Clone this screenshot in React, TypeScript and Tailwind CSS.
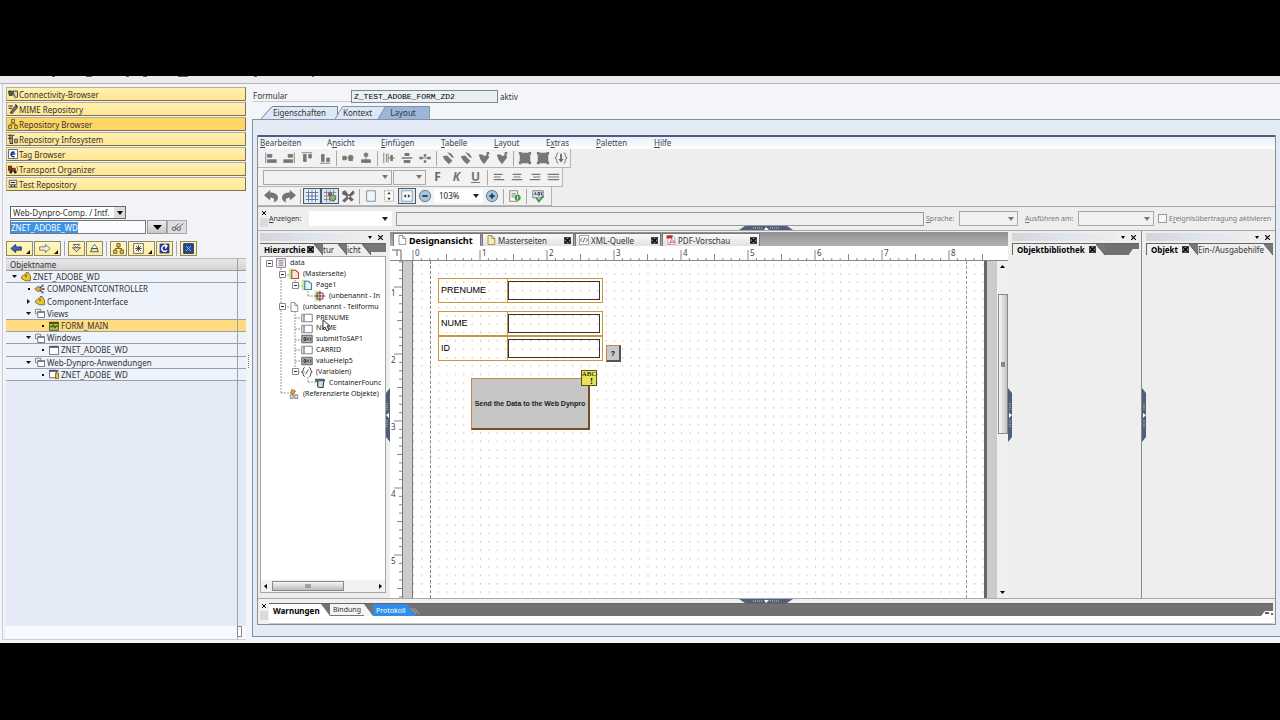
import React from 'react';
import clsx from 'clsx';

type IconProps = { name: string; size?: number };

const icons: Record<string, React.ReactNode> = {
  // sidebar
  connect: <><path d="M1 3h5l2 2-3 4H2z" fill="#5c7a3a" stroke="#222" /><path d="M7 3h6v8l-3 1-2-5z" fill="#cfd8c0" stroke="#222" /><path d="M3 5l5 5" stroke="#111" /></>,
  mime: <><path d="M3 12l7-9 3 2-7 8z" fill="#777" stroke="#222" /><path d="M1 3h6M1 6h5M10 1l3 3" stroke="#222" strokeWidth="1.500" /></>,
  orgchart: <><path d="M5 1h4v4H5zM1 9h4v4H1zM9 9h4v4H9z" fill="#e9c95a" stroke="#5c4a10" /><path d="M7 5v2M3 9V7h8v2" fill="none" stroke="#5c4a10" /></>,
  info: <><path d="M0 2h9M0 6h6M3 1v12M6 3v10M3 13h4" fill="none" stroke="#333" strokeWidth="1.500" /><path d="M9 7h4v5H9z" fill="#b8b08a" stroke="#333" /></>,
  tag: <><path d="M1 1h12v12H1z" fill="#fff" stroke="#33406a" /><path d="M4 7h6M9 5a3 3 0 1 0 0 5" fill="none" stroke="#1b2f8a" strokeWidth="2" /></>,
  truck: <><path d="M1 3h4v6H1zM5 6h5v4H5z" fill="#9a3a25" stroke="#4a1a10" /><circle cx="4" cy="11" r="2" fill="#222" /><circle cx="10" cy="11" r="2" fill="#222" /><path d="M11 4h2v6" fill="none" stroke="#a06030" /></>,
  test: <><path d="M2 2h10v6H2z" fill="#eee" stroke="#333" /><path d="M4 5h6M1 11h12M5 8v3M9 8v3" stroke="#333" strokeWidth="1.5" /></>,
  left: <path d="M0 7l6-5v3h7v4H6v3z" fill="#3f66b4" stroke="#1c2c5c" />,
  right: <path d="M14 7L8 2v3H1v4h7v3z" fill="#eee" stroke="#666" />,
  down: <><path d="M3 2h8L7 6z" fill="#fff" stroke="#444" /><path d="M2 6l5 5 5-5z" fill="#d7e6c8" stroke="#444" /></>,
  up: <><path d="M7 2l4 5H3z" fill="#fff" stroke="#444" /><path d="M2 11l2-4h6l2 4z" fill="#d7e6c8" stroke="#444" /></>,
  star: <><path d="M1 1h12v12H1z" fill="#fffbe0" stroke="#555" /><path d="M7 3v8M3 7h8M4 4l6 6M10 4l-6 6" stroke="#333" /></>,
  refresh: <><path d="M1 1h12v12H1z" fill="#26398c" /><path d="M9 4a3.500 3.500 0 1 0 1 5M7 2l3 2-2 3" fill="none" stroke="#fff" strokeWidth="1.700" /></>,
  full: <><path d="M1 1h12v12H1z" fill="#264a94" stroke="#142450" /><path d="M4 4l6 6M10 4l-6 6" stroke="#b9cdf0" /></>,
  glasses: <><circle cx="3.5" cy="9" r="2" fill="none" stroke="#444" /><circle cx="9" cy="9" r="2" fill="none" stroke="#444" /><path d="M5 7l4-4M10 7l4-4M5.500 9h1.500" fill="none" stroke="#444" /></>,
  // object list
  comp: <><path d="M1 7l3-3h3V1h3l3 5v6H6L1 9z" fill="#e6c534" stroke="#6a5610" /><path d="M6 5h2v2H6z" fill="#6a5610" /></>,
  ctrl: <><path d="M5 7L10 3M5 7l5 4" stroke="#333" strokeWidth="1.500" /><path d="M0 7l5-4 3 4-3 4z" fill="#f0a73a" stroke="#7a5510" /><path d="M9 1h3v3H9zM9 10h3v3H9z" fill="#6f83b5" /><path d="M9 6h4v2H9z" fill="#333" /></>,
  folder: <><path d="M1 2h7v6H1z" fill="#f4f4f4" stroke="#666" /><path d="M4 5h9v8H4z" fill="#fff" stroke="#555" /><path d="M4 6h9" stroke="#7b8494" strokeWidth="2" /></>,
  view: <><path d="M1 2h12v11H1z" fill="#a8bd48" stroke="#3d4a18" /><path d="M1 3h12" stroke="#2d3812" strokeWidth="2" /><path d="M1 8h3l2-2 2 3 2-2h3" fill="none" stroke="#3d4a18" strokeWidth="1.500" /></>,
  win: <><path d="M1 2h12v11H1z" fill="#fff" stroke="#555" /><path d="M1 3h12" stroke="#37415c" strokeWidth="2" /></>,
  app: <><path d="M1 2h9v10H1z" fill="#fff" stroke="#444" /><path d="M1 3h12" stroke="#37415c" strokeWidth="2" /><path d="M9 6h4v7H9z" fill="#e6c534" stroke="#6a5610" /></>,
  // alignment bar
  alLeft: <path d="M1 1v12M3 3h5v3H3zM3 9h10v3H3z" fill="#777" stroke="#777" />,
  alRight: <path d="M13 1v12M6 3h5v3H6zM1 9h10v3H1z" fill="#777" stroke="#777" />,
  alTop: <path d="M1 1h12M3 3h3v8H3zM9 3h3v4H9z" fill="#777" stroke="#777" />,
  alBottom: <path d="M1 13h12M3 3h3v8H3zM9 7h3v4H9z" fill="#777" stroke="#777" />,
  cenH: <path d="M1 5h4v4H1zM8 4h4v6H8zM5 7h9" fill="#777" stroke="#777" />,
  cenV: <path d="M5 2h4v3H5zM2 9h10v3H2zM7 0v9" fill="#777" stroke="#777" />,
  disH: <path d="M1 1v12M4 2v10M6 2v10M9 4h2v6H9zM6 7h8" fill="#777" stroke="#777" />,
  disV: <path d="M1 7h12M5 2h4v2H5zM4 10h6v2H4z" fill="#777" stroke="#777" strokeWidth="1.500" />,
  disB: <path d="M1 6h3v2H1zM10 6h3v2h-3zM6 3h2v2H6zM6 10h2v2H6zM4 7h6" fill="#777" stroke="#777" />,
  tagA: <path d="M1 5l5-1 6 6-4 4-5-5zM6 0l5 2 3 5-3-1z" fill="#777" />,
  tagB: <path d="M1 3h4l3 2 3-3 2 4-3 4-3 4-4-5zM10 0h3v3h-3z" fill="#777" />,
  frame: <path d="M1 1h12v12H1zM0 0h3v3H0zM11 0h3v3h-3zM0 11h3v3H0zM11 11h3v3h-3z" fill="#777" />,
  brace: <><path d="M4 1Q2 1 2 4t-2 3q2 0 2 3t2 3M10 1q2 0 2 3t2 3q-2 0-2 3t-2 3" fill="none" stroke="#666" /><path d="M6 2h2v6h2l-3 4-3-4h2z" fill="#666" /></>,
  txtL: <path d="M1 4h10M1 7h8M1 10h12" stroke="#777" strokeWidth="1.300" />,
  txtC: <path d="M2 4h10M3 7h8M1 10h12" stroke="#777" strokeWidth="1.300" />,
  txtR: <path d="M3 4h10M5 7h8M1 10h12" stroke="#777" strokeWidth="1.300" />,
  txtJ: <path d="M1 4h13M1 7h13M1 10h13" stroke="#777" strokeWidth="1.300" />,
  undo: <path d="M-1 6l7-6v3c5 0 9 2 9 6 0 2-2 5-5 5 2-3 0-5-4-5v3z" fill="#757575" />,
  redo: <path d="M15 6L8 0v3C3 3-1 5-1 9c0 2 2 5 5 5-2-3 0-5 4-5v3z" fill="#757575" />,
  grid: <><path d="M0 0h14v14H0z" fill="#eef4fb" /><path d="M3 0v14M7 0v14M11 0v14M0 3h14M0 7h14M0 11h14" stroke="#4e6d94" /></>,
  snap: <><path d="M3 0v14M7 0v14M11 0v14M0 3h14M0 7h14M0 11h14" stroke="#71869f" /><path d="M5 3h4v4H5z" fill="#9a4436" /><circle cx="10" cy="9" r="3.500" fill="#8fae88" stroke="#47693f" /></>,
  tools: <path d="M1 2l3-1 2 3 7 7-2 2-7-7-3-1zM13 1l-5 5-7 6 2 2 6-6 5-4z" fill="#666" stroke="#666" />,
  page: <path d="M2 1h10v12H2z" fill="#eff5fb" stroke="#71869c" />,
  pageH: <><path d="M2 1h10v12H2z" fill="#fff" stroke="#999" strokeDasharray="2 1" /><path d="M7 2l2 3H5zM7 12l2-3H5z" fill="#444" /></>,
  pageW: <><path d="M1 1h12v12H1z" fill="#f5f9fd" stroke="#8798aa" /><path d="M3 7l3-2v4zM11 7L8 5v4z" fill="#444" /></>,
  minus: <><circle cx="7" cy="7" r="6.500" fill="#a8c4de" stroke="#56728f" /><path d="M4 7h6" stroke="#1d3854" strokeWidth="2" /></>,
  plus: <><circle cx="7" cy="7" r="6.500" fill="#a8c4de" stroke="#56728f" /><path d="M4 7h6M7 4v6" stroke="#1d3854" strokeWidth="2" /></>,
  check: <><path d="M1 1h9v12H1z" fill="#fff" stroke="#777" /><path d="M3 4h5M3 6h5M3 8h3" stroke="#777" /><circle cx="10" cy="9" r="3.500" fill="#3f9a3c" /><path d="M10 7v4" stroke="#fff" /></>,
  spell: <><path d="M1 1h12v8H1z" fill="#dfe7f0" stroke="#6c7c90" /><path d="M3 6l1-3 1 3M7 3v3h2V3zM12 3h-1v3h1" fill="none" stroke="#333" /><path d="M5 9l3 4 5-6" fill="none" stroke="#3f8f45" strokeWidth="2" /></>,
  // document tabs and hierarchy
  doc: <path d="M3 1h5l4 4v8H3zM8 1v4h4" fill="#fff" stroke="#777" />,
  docY: <path d="M3 1h5l4 4v8H3zM8 1v4h4" fill="#f6edb0" stroke="#857c3c" />,
  code: <><path d="M1 1h12v12H1z" fill="#fff" stroke="#8b8b8b" /><path d="M5 4L2 7l3 3M9 4l3 3-3 3M8 4l-2 6" fill="none" stroke="#444" /></>,
  pdf: <><path d="M3 1h6l3 3v9H3z" fill="#fff" stroke="#999" /><path d="M1 1h8v4H1z" fill="#c22a22" /><path d="M5 12l3-6 4 4-6 0" fill="none" stroke="#c22a22" /></>,
  data: <><path d="M1 1h12v12H1z" fill="#efe7f2" stroke="#75657b" /><path d="M4 4h6M4 7h6M4 10h6" stroke="#5b4a63" /></>,
  master: <><path d="M0 0h7v14H0z" fill="#c3e89e" /><path d="M4 2h5l4 3v8H4z" fill="#fbe5d6" stroke="#b0512f" strokeWidth="1.500" /></>,
  content: <><path d="M0 0h7v14H0z" fill="#c3e89e" /><path d="M4 2h5l4 3v8H4z" fill="#e4f1f7" stroke="#4f7f93" strokeWidth="1.500" /></>,
  area: <><path d="M0 0h7v14H0z" fill="#c3e89e" /><path d="M3 3h8v8H3zM7 0v14M0 7h14" fill="none" stroke="#7d2f4a" strokeWidth="1.300" /></>,
  field: <><path d="M0 2h14v10H0z" fill="#fff" stroke="#4e5d68" /><path d="M3 4v6M2 4h2M2 10h2" stroke="#333" /></>,
  btn: <><path d="M0 2h14v10H0z" fill="#b0b0b0" stroke="#444" /><path d="M3 5v4h2V5zM7 5v4M10 5L8 7l2 2M12 5v4" fill="none" stroke="#222" /></>,
  vars: <path d="M4 1Q2 1 2 4t-2 3q2 0 2 3t2 3M10 1q2 0 2 3t2 3q-2 0-2 3t-2 3M5 10l4-6" fill="none" stroke="#444" strokeWidth="1.300" />,
  script: <path d="M1 2h10q2 0 2 2H4v8q0 1 7 1l1-8M1 2q0 3 3 3" fill="#cfe0e8" stroke="#26404e" strokeWidth="1.500" />,
  refs: <><path d="M2 8h4v5H2zM8 8h4v5H8z" fill="#d6d6d6" stroke="#777" /><path d="M4 1l5 2-3 5-3-2z" fill="#e2a33b" stroke="#8c5d16" /></>,
};

function Icon({ name, size = 12 }: IconProps) {
  return (
    <svg width={size} height={size} viewBox="-1 -1 16 16" className="shrink-0" aria-hidden="true">
      {icons[name]}
    </svg>
  );
}

function Caret() {
  return (
    <svg width="6" height="4" viewBox="0 0 6 4" aria-hidden="true">
      <path d="M0 0h6L3 4z" fill="currentColor" />
    </svg>
  );
}

type DropProps = { label: string; value?: string; className?: string; disabled?: boolean };

function Drop({ label, value = '', className, disabled }: DropProps) {
  return (
    <div className={clsx('relative flex border', disabled ? 'border-[#a8a8a8] bg-[#f1f1f1] text-[#777]' : 'border-white bg-white text-[#222]', className)}>
      <select aria-label={label} disabled={disabled} className="w-full appearance-none bg-transparent pl-1 leading-[10px] outline-none">
        <option>{value}</option>
      </select>
      <span className="pointer-events-none absolute inset-y-0 right-[3px] flex items-center"><Caret /></span>
    </div>
  );
}

function Sep() {
  return <span className="mx-[2px] h-[15px] w-px shrink-0 bg-[#a9a9a9]" />;
}

function ToolButton({ icon, pressed }: { icon: string; pressed?: boolean }) {
  return (
    <button aria-label={icon} className={clsx('flex h-[16px] w-[18px] shrink-0 items-center justify-center', pressed && 'border border-[#4b5a6c] bg-[#dde5ee]')}>
      <Icon name={icon} size={14} />
    </button>
  );
}

function CloseBox() {
  return (
    <button aria-label="close" className="flex h-[7px] w-[7px] shrink-0 items-center justify-center border border-[#444] bg-[#888]">
      <svg width="5" height="5" viewBox="0 0 5 5"><path d="M0 0l5 5M5 0L0 5" stroke="#000" strokeWidth="1.400" /></svg>
    </button>
  );
}

function PanelBar() {
  return (
    <div className="flex h-[10px] shrink-0 items-center gap-[6px] pr-[3px] text-black">
      <div className="h-[8px] flex-1 bg-linear-to-r from-[#d3d5da] via-[#e0e4ec] to-[#ececee]" />
      <svg width="4" height="3" viewBox="0 0 4 3"><path d="M0 0h4L2 3z" /></svg>
      <svg width="5" height="5" viewBox="0 0 5 5"><path d="M0 0l5 5M5 0L0 5" stroke="#000" strokeWidth="1.200" /></svg>
    </div>
  );
}

// slanted edge between two palette tabs
function Slant() {
  return (
    <svg width="9" height="11" viewBox="0 0 9 11" className="shrink-0" aria-hidden="true">
      <path d="M0 0h9v11z" fill="#777" />
      <path d="M0 0l9 11" stroke="#555" />
    </svg>
  );
}

function GripV({ className, flip }: { className: string; flip?: boolean }) {
  return (
    <svg width="5" height="54" viewBox="0 0 5 54" className={clsx('absolute', className)} aria-hidden="true">
      <path d={flip ? 'M5 0L1 5v44l4 5z' : 'M0 0l4 5v44l-4 5z'} fill="#4f5f75" />
      <path d="M2 15v8M2 32v8" stroke="#c8d2de" strokeDasharray="1 1" />
      <path d={flip ? 'M4 25v5L1 27z' : 'M1 25v5l3-3z'} fill="#fff" />
    </svg>
  );
}

function GripH({ className, flip }: { className: string; flip?: boolean }) {
  return (
    <svg width="54" height="5" viewBox="0 0 54 5" className={clsx('absolute', className)} aria-hidden="true">
      <path d={flip ? 'M0 0h54l-6 4H6z' : 'M6 0h42l6 4H0z'} fill="#4f6078" />
      <path d="M14 2h9M31 2h9" stroke="#c8d2de" strokeDasharray="1 1" />
      <path d={flip ? 'M25 1h5l-3 3z' : 'M25 4h5l-3-3z'} fill="#fff" />
    </svg>
  );
}

const browsers = [
  { icon: 'connect', label: 'Connectivity-Browser' },
  { icon: 'mime', label: 'MIME Repository' },
  { icon: 'orgchart', label: 'Repository Browser', active: true },
  { icon: 'info', label: 'Repository Infosystem' },
  { icon: 'tag', label: 'Tag Browser' },
  { icon: 'truck', label: 'Transport Organizer' },
  { icon: 'test', label: 'Test Repository' },
];

const objects = [
  { depth: 0, mark: 'open', icon: 'comp', label: 'ZNET_ADOBE_WD', line: true },
  { depth: 1, mark: 'dot', icon: 'ctrl', label: 'COMPONENTCONTROLLER' },
  { depth: 1, mark: 'closed', icon: 'comp', label: 'Component-Interface' },
  { depth: 1, mark: 'open', icon: 'folder', label: 'Views', line: true },
  { depth: 2, mark: 'dot', icon: 'view', label: 'FORM_MAIN', line: true, active: true },
  { depth: 1, mark: 'open', icon: 'folder', label: 'Windows', line: true },
  { depth: 2, mark: 'dot', icon: 'win', label: 'ZNET_ADOBE_WD', line: true },
  { depth: 1, mark: 'open', icon: 'folder', label: 'Web-Dynpro-Anwendungen', line: true },
  { depth: 2, mark: 'dot', icon: 'app', label: 'ZNET_ADOBE_WD', line: true },
];

const marks: Record<string, string> = {
  open: 'M0 1h5L2.500 4z',
  closed: 'M1 0v5l3-2.500z',
  dot: 'M2 2h2v2H2z',
};

function YellowButton({ icon, menu }: { icon: string; menu?: boolean }) {
  return (
    <button aria-label={icon} className={clsx('flex h-[15px] items-center justify-center border border-[#8f8a6a] bg-linear-to-b from-[#fff6c4] to-[#ffec9c]', menu ? 'w-[27px] gap-[3px]' : 'w-[17px]')}>
      <Icon name={icon} size={13} />
      {menu && <svg width="4" height="10" viewBox="0 0 4 10"><path d="M4 6v4H0z" fill="#111" /></svg>}
    </button>
  );
}

function Sidebar() {
  return (
    <aside className="relative flex w-[244px] shrink-0 flex-col border-b border-l border-[#c9cfd8] bg-[#f1f3f7] pt-[3px] pl-[3px]">
      <nav className="flex flex-col gap-px">
        {browsers.map((b) => (
          <button key={b.label} className={clsx('flex h-[14px] items-center border border-t-[#b9b08a] border-r-[#77735c] border-b-[#77735c] border-l-[#b9b08a] text-left', b.active ? 'bg-[#ffd566]' : 'bg-linear-to-b from-[#fff0b4] to-[#ffe68e]')}>
            <Icon name={b.icon} size={12} />
            {b.label}
          </button>
        ))}
      </nav>

      <div className="mt-[15px] flex pl-[4px]">
        <div className="relative flex h-[13px] w-[116px] border border-[#666] bg-white">
          <select aria-label="Objekttyp" className="w-full appearance-none pl-[2px] leading-[10px] outline-none">
            <option>Web-Dynpro-Comp. / Intf.</option>
          </select>
          <span className="pointer-events-none absolute top-0 right-0 flex h-[11px] w-[11px] items-center justify-center bg-[#dcdcdc] text-black"><Caret /></span>
        </div>
      </div>
      <div className="mt-px flex pl-[4px]">
        <div className="flex h-[14px] w-[136px] items-center border border-[#777] bg-[#fafcff]">
          <input aria-label="Objekt" defaultValue="ZNET_ADOBE_WD" className="field-sizing-content h-[11px] bg-[#3d93e6] text-white outline-none" />
        </div>
        <button aria-label="open list" className="ml-px flex h-[14px] w-[20px] items-center justify-center border border-[#999] bg-linear-to-b from-[#eee] to-[#c6c6c6] text-black">
          <svg width="9" height="5" viewBox="0 0 9 5"><path d="M0 0h9L4.500 5z" /></svg>
        </button>
        <button aria-label="display" className="flex h-[14px] w-[20px] items-center justify-center border border-[#aaa] bg-[#dedede]">
          <Icon name="glasses" size={14} />
        </button>
      </div>

      <div className="mt-[7px] flex h-[15px] items-center gap-[1px]">
        <YellowButton icon="left" menu />
        <YellowButton icon="right" menu />
        <Sep />
        <YellowButton icon="down" />
        <YellowButton icon="up" />
        <Sep />
        <YellowButton icon="orgchart" />
        <YellowButton icon="star" menu />
        <YellowButton icon="refresh" />
        <Sep />
        <YellowButton icon="full" />
      </div>

      <div className="relative mt-[2px] flex min-h-0 flex-1 flex-col bg-[#e5ebf6]">
        <div className="flex h-[13px] shrink-0 items-center border-t border-b border-t-[#bbb] border-b-[#999] bg-linear-to-b from-[#e8e8e8] to-[#d3d3d3] pl-[4px]">Objektname</div>
        <ul className="grid h-[110px] shrink-0 grid-rows-9">
          {objects.map((o, i) => (
            <li key={i} className={clsx('flex items-center border-b', o.line ? 'border-[#9aa0aa]' : 'border-transparent', o.active ? 'bg-[#ffdb82]' : 'bg-[#edf2fb]')} style={{ paddingLeft: 6 + o.depth * 14 }}>
              <svg width="5" height="5" viewBox="0 0 5 5" className="mr-[3px] shrink-0"><path d={marks[o.mark]} fill="#111" /></svg>
              <Icon name={o.icon} size={12} />
              <span className="pl-px">{o.label}</span>
            </li>
          ))}
        </ul>
        <div className="flex-1" />
        <div className="h-[13px] shrink-0 bg-[#f7fafe]" />
        <span className="absolute top-0 bottom-0 left-[231px] w-px bg-[#9ba1ab]" />
        <span className="absolute bottom-[2px] left-[231px] h-[11px] w-[5px] border border-[#888] bg-white" />
      </div>
      <span className="absolute top-[271px] -right-[3px] h-[13px] border-l border-dotted border-[#777]" />
    </aside>
  );
}

const formTabs = [
  { label: 'Eigenschaften', className: 'w-[77px]' },
  { label: 'Kontext', className: 'w-[54px] -ml-[3px] pr-[9px]' },
  { label: 'Layout', className: 'w-[52px] -ml-[11px] pr-[2px]', active: true },
];

const menu = [
  ['Bearbeiten', 'w-[67px]'], ['Ansicht', 'w-[54px]'], ['Einfügen', 'w-[60px]'], ['Tabelle', 'w-[53px]'],
  ['Layout', 'w-[52px]'], ['Extras', 'w-[50px]'], ['Paletten', 'w-[58px]'], ['Hilfe', 'w-[30px]'],
];

// position of the underlined letter in each menu label
const accel: Record<string, number> = { Ansicht: 1, Extras: 1 };

function MenuBar() {
  return (
    <div className="flex h-[14px] items-start border-t-2 border-[#505c78] bg-linear-to-b from-[#e9eefb] to-white pl-[2px] leading-[11px] text-[#3d4450]">
      {menu.map(([label, width]) => {
        const k = accel[label] ?? 0;
        return (
          <button key={label} className={clsx('shrink-0 text-left', width)}>
            {label.slice(0, k)}<u>{label[k]}</u>{label.slice(k + 1)}
          </button>
        );
      })}
    </div>
  );
}

function Toolbars() {
  const bar = 'flex h-[19px] items-center self-start border-r border-b border-[#b5b5b5] bg-[#f2f2f2] pl-[4px]';
  return (
    <div className="flex flex-col border-b border-[#aaa]">
      <div className={bar}>
        {['alLeft', 'alRight', 'alTop', 'alBottom'].map((n) => <ToolButton key={n} icon={n} />)}
        <Sep />
        {['cenH', 'cenV'].map((n) => <ToolButton key={n} icon={n} />)}
        <Sep />
        {['disH', 'disV', 'disB'].map((n) => <ToolButton key={n} icon={n} />)}
        <Sep />
        {['tagA', 'tagA', 'tagB', 'tagB'].map((n, i) => <ToolButton key={i} icon={n} />)}
        <Sep />
        {['frame', 'frame', 'brace'].map((n, i) => <ToolButton key={i} icon={n} />)}
      </div>
      <div className={bar}>
        <Drop label="Schriftart" disabled className="ml-px h-[15px] w-[129px]" />
        <Drop label="Schriftgrad" disabled className="ml-px h-[15px] w-[33px]" />
        <button className="ml-[2px] w-[19px] text-center text-xs font-bold text-[#666]">F</button>
        <button className="w-[19px] text-center text-xs font-bold text-[#777] italic">K</button>
        <button className="w-[19px] text-center text-xs font-bold text-[#777] underline">U</button>
        <Sep />
        {['txtL', 'txtC', 'txtR', 'txtJ'].map((n) => <ToolButton key={n} icon={n} />)}
      </div>
      <div className={bar}>
        <ToolButton icon="undo" />
        <ToolButton icon="redo" />
        <Sep />
        <ToolButton icon="grid" pressed />
        <ToolButton icon="snap" pressed />
        <ToolButton icon="tools" />
        <Sep />
        <ToolButton icon="page" />
        <ToolButton icon="pageH" />
        <ToolButton icon="pageW" pressed />
        <ToolButton icon="minus" />
        <Drop label="Zoom" value="103%" className="h-[14px] w-[49px]" />
        <ToolButton icon="plus" />
        <Sep />
        <ToolButton icon="check" />
        <Sep />
        <ToolButton icon="spell" />
        <span className="w-[4px]" />
      </div>
    </div>
  );
}

function ScriptBar() {
  return (
    <div className="relative flex h-[24px] items-center border-b border-[#aaa] text-[7px] text-[#777]">
      <div className="flex w-[11px] flex-col items-center gap-[3px]">
        <svg width="4" height="4" viewBox="0 0 4 4"><path d="M0 0l4 4M4 0L0 4" stroke="#000" /></svg>
        <span className="h-[9px] w-[8px] bg-[#d9dbde]" />
      </div>
      <span className="w-[40px] text-[#333]"><u>A</u>nzeigen:</span>
      <Drop label="Anzeigen" className="h-[15px] w-[83px]" />
      <input aria-label="Skript" className="ml-[4px] h-[14px] min-w-0 flex-1 border border-[#9a9a9a] bg-[#efefef]" />
      <span className="w-[35px] pl-[2px] whitespace-nowrap"><u>S</u>prache:</span>
      <Drop label="Sprache" disabled className="h-[15px] w-[59px]" />
      <span className="w-[60px] pl-[7px] whitespace-nowrap"><u>A</u>usführen am:</span>
      <Drop label="Ausführen am" disabled className="h-[15px] w-[76px]" />
      <label className="flex w-[121px] items-center gap-[2px] pl-[4px] whitespace-nowrap">
        <input type="checkbox" className="h-[9px] w-[9px] appearance-none border border-[#999] bg-[#f6f6f6]" />
        <span>E<u>r</u>eignisübertragung aktivieren</span>
      </label>
      <GripH className="-bottom-px left-[481px]" />
    </div>
  );
}

const nodes = [
  { depth: 0, icon: 'data', label: 'data', open: true },
  { depth: 1, icon: 'master', label: '(Masterseite)', open: true },
  { depth: 2, icon: 'content', label: 'Page1', open: true },
  { depth: 3, icon: 'area', label: '(unbenannt - In' },
  { depth: 1, icon: 'doc', label: '(unbenannt - Teilformu', open: true },
  { depth: 2, icon: 'field', label: 'PRENUME' },
  { depth: 2, icon: 'field', label: 'NUME' },
  { depth: 2, icon: 'btn', label: 'submitToSAP1' },
  { depth: 2, icon: 'field', label: 'CARRID' },
  { depth: 2, icon: 'btn', label: 'valueHelp5' },
  { depth: 2, icon: 'vars', label: '(Variablen)', open: true },
  { depth: 3, icon: 'script', label: 'ContainerFounc' },
  { depth: 1, icon: 'refs', label: '(Referenzierte Objekte)' },
];

function Hierarchy() {
  return (
    <section className="relative flex w-[132px] shrink-0 flex-col pt-px pr-[4px] pl-[2px]">
      <PanelBar />
      <div className="mt-px flex h-[12px] shrink-0 items-center overflow-hidden border-t border-[#666] pl-[4px]">
        <b className="w-[43px] text-black">Hierarchie</b>
        <CloseBox />
        <Slant />
        <span className="w-[15px]">tur</span>
        <Slant />
        <span className="w-[15px]">icht</span>
        <Slant />
        <div className="h-[8px] flex-1 self-start bg-[#777]" />
      </div>
      <div className="mt-px flex min-h-0 flex-1 flex-col border border-[#a5a5a5] bg-white">
        <div className="relative min-h-0 flex-1 overflow-hidden">
          <svg width="124" height="141" viewBox="0 0 124 141" className="absolute top-px left-0" aria-hidden="true">
            <path d="M20 10v125M20 17h10M20 49h10M20 135h10M34 22v6M34 28h10M47 33v5M47 38h10M34 53v61M34 60h10M34 71h10M34 82h10M34 92h10M34 103h10M34 114h10M47 119v5M47 124h10" fill="none" stroke="#999" strokeDasharray="2 1" />
          </svg>
          <ul className="relative mt-px grid h-[141px] grid-rows-13 text-[7px] text-[#222]">
            {nodes.map((n) => (
              <li key={n.label} className="flex items-center leading-[10px] whitespace-nowrap" style={{ paddingLeft: 3 + n.depth * 13 }}>
                <span className="w-[11px] shrink-0 pl-[2px]">
                  {n.open && <svg width="7" height="7" viewBox="0 0 7 7"><path d="M.5.5h6v6h-6z" fill="#fff" stroke="#888" /><path d="M2 3.500h3" stroke="#222" /></svg>}
                </span>
                <Icon name={n.icon} size={12} />
                <span className="pl-[3px]">{n.label}</span>
              </li>
            ))}
          </ul>
          <svg width="10" height="14" viewBox="0 0 10 14" className="absolute top-[62px] left-[61px]" aria-hidden="true">
            <path d="M1 1v9l2-2 2 4 2-1-2-4h3z" fill="#fff" stroke="#333" />
          </svg>
        </div>
        <div className="flex h-[12px] shrink-0 items-center gap-[4px] bg-[#f1f1f1] px-[3px]">
          <svg width="4" height="5" viewBox="0 0 4 5"><path d="M3 0v5L0 2z" /></svg>
          <div className="flex h-[10px] w-[72px] items-center justify-center border border-[#888] bg-linear-to-b from-[#f6f6f6] to-[#bdbdbd]">
            <svg width="7" height="4" viewBox="0 0 7 4"><path d="M1 0v4M3 0v4M5 0v4" stroke="#666" /></svg>
          </div>
          <svg width="4" height="5" viewBox="0 0 4 5" className="ml-auto"><path d="M1 0v5l3-3z" /></svg>
        </div>
      </div>
      <div className="h-[5px] shrink-0" />
      <GripV className="top-[157px] right-0" flip />
    </section>
  );
}

const INCH = 67;

function HRuler() {
  const ticks = Array.from({ length: 69 }, (_, i) => i);
  return (
    <div className="relative h-[15px] shrink-0 overflow-hidden border-b border-[#888] bg-white text-[#444]">
      <svg width="100%" height="15" className="absolute inset-0" aria-hidden="true">
        <path d="M2 4h9M11 4v11M7 4v6" fill="none" stroke="#666" />
        {ticks.map((i) => (
          <path key={i} d={`M${23 + (i * INCH) / 8} ${i % 8 === 0 ? 4 : i % 4 === 0 ? 8 : 12}v11`} stroke="#888" />
        ))}
      </svg>
      {[0, 1, 2, 3, 4, 5, 6, 7, 8].map((n) => (
        <span key={n} className="absolute top-px" style={{ left: 25 + n * INCH }}>{n}</span>
      ))}
    </div>
  );
}

function VRuler() {
  const ticks = Array.from({ length: 60 }, (_, i) => i);
  return (
    <div className="relative w-[12px] shrink-0 overflow-hidden bg-white text-[#444]">
      <svg width="12" height="100%" className="absolute inset-0" aria-hidden="true">
        {ticks.map((i) => (
          <path key={i} d={`M${i % 8 === 0 ? 4 : i % 4 === 0 ? 7 : 9} ${26 + ((i - 8) * INCH) / 8}h9`} stroke="#888" />
        ))}
      </svg>
      {[1, 2, 3, 4, 5].map((n) => (
        <span key={n} className="absolute left-px" style={{ top: 26 + (n - 1) * INCH }}>{n}</span>
      ))}
    </div>
  );
}

function FormField({ label, className }: { label: string; className: string }) {
  return (
    <label className={clsx('absolute left-[25px] flex h-[25px] w-[165px] items-center border border-[#c9963c] font-["Liberation_Sans",sans-serif] text-[9px] text-black', className)}>
      <span className="w-[68px] pl-[2px]">{label}</span>
      <span className="flex h-full items-center border-l border-[#c9963c]">
        <input aria-label={label} className="h-[19px] w-[92px] border border-[#333]" />
      </span>
    </label>
  );
}

function Canvas() {
  return (
    <div className="relative min-w-0 flex-1 overflow-hidden bg-white">
      <svg width="100%" height="100%" className="absolute inset-0" aria-hidden="true">
        <defs>
          <pattern id="dots" width="8.375" height="8.375" patternUnits="userSpaceOnUse">
            <rect x="0" y="4" width="1" height="1" fill="#9c9c9c" />
          </pattern>
        </defs>
        <rect width="100%" height="100%" fill="url(#dots)" />
      </svg>
      <span className="absolute inset-y-0 left-[17px] border-l border-dashed border-[#888]" />
      <span className="absolute inset-y-0 right-[17px] border-l border-dashed border-[#999]" />
      <FormField label="PRENUME" className="top-[17px]" />
      <FormField label="NUME" className="top-[50px]" />
      <FormField label="ID" className="top-[75px]" />
      <button className="absolute top-[84px] left-[193px] flex h-[17px] w-[15px] items-center justify-center border border-r-2 border-b-2 border-[#b98a4a] border-r-[#555] border-b-[#555] bg-[#c8c8c8] font-['Liberation_Sans',sans-serif] text-[7px] font-bold text-black">?</button>
      <button className="absolute top-[117px] left-[58px] h-[52px] w-[119px] border border-r-2 border-b-2 border-[#c08b3c] border-r-[#7a4e1c] border-b-[#7a4e1c] bg-[#c6c6c6] text-center font-['Liberation_Sans',sans-serif] text-[7px] font-bold whitespace-nowrap text-[#222]">Send the Data to the Web Dynpro</button>
      <span className="absolute top-[109px] left-[168px] flex h-[16px] w-[16px] flex-col items-center border border-[#55521a] bg-[#e6e25a] font-['Liberation_Serif',serif] text-[7px] leading-[7px] text-black">
        <span>ABC</span>
        <b className="self-end pr-[3px] text-[9px]">!</b>
      </span>
    </div>
  );
}

const docTabs = [
  { icon: 'doc', label: 'Designansicht', width: 'w-[88px]', active: true },
  { icon: 'docY', label: 'Masterseiten', width: 'w-[92px]' },
  { icon: 'code', label: 'XML-Quelle', width: 'w-[86px]' },
  { icon: 'pdf', label: 'PDF-Vorschau', width: 'w-[98px]' },
];

function Designer() {
  return (
    <section className="flex min-w-0 flex-1 flex-col pt-px">
      <div className="flex h-[14px] shrink-0 items-end gap-px bg-linear-to-b from-[#8f8f8f] to-[#b4b4b4] pl-[3px]">
        {docTabs.map((t) => (
          <div key={t.label} role="tab" className={clsx('flex h-[13px] items-center border-t border-r border-l border-[#777] pr-[2px] pl-[2px]', t.width, t.active ? 'bg-[#fdfdfd] text-[9px] font-bold text-black' : 'bg-linear-to-b from-[#fafafa] to-[#e2e2e2]')}>
            <Icon name={t.icon} size={12} />
            <span className="flex-1 pl-px">{t.label}</span>
            {!t.active && <CloseBox />}
          </div>
        ))}
      </div>
      <HRuler />
      <div className="flex min-h-0 flex-1">
        <VRuler />
        <div className="w-[11px] shrink-0 border-r border-l border-[#777] bg-[#cccccc]" />
        <Canvas />
        <div className="w-[13px] shrink-0 border-l-3 border-[#666] bg-[#cbcbcb]" />
        <div className="flex w-[11px] shrink-0 flex-col items-center bg-[#f0f0f0] pt-[4px]">
          <svg width="5" height="3" viewBox="0 0 5 3"><path d="M0 3h5L2.500 0z" /></svg>
          <div className="mt-[26px] flex h-[140px] w-[10px] items-center justify-center border border-[#888] bg-linear-to-r from-[#fafafa] to-[#c2c2c2]">
            <span className="h-[5px] w-[4px] bg-[#888]" />
          </div>
          <svg width="5" height="3" viewBox="0 0 5 3" className="mt-auto mb-[4px]"><path d="M0 0h5L2.500 3z" /></svg>
        </div>
      </div>
    </section>
  );
}

function SidePalette({ title, extra, className }: { title: string; extra?: string; className: string }) {
  return (
    <section className={clsx('relative shrink-0 border-r border-[#8a8a8a] bg-[#eeeeee] pt-px pr-[2px]', className)}>
      <PanelBar />
      <div className="mt-px flex h-[12px] items-center overflow-hidden border-t border-l border-[#666] pl-[4px] whitespace-nowrap">
        <b className="pr-[4px] text-black">{title}</b>
        <CloseBox />
        <Slant />
        {extra ? (
          <>
            <span className="flex-1 border-b border-[#888]">{extra}</span>
            <Slant />
          </>
        ) : (
          <div className="h-[11px] flex-1 bg-[#707070] [clip-path:polygon(0_0,100%_0,100%_5px,82%_5px,70%_100%,0_100%)]" />
        )}
      </div>
      <GripV className="top-[157px] left-0" />
    </section>
  );
}

function OutputPanel() {
  return (
    <div className="relative flex h-[27px] shrink-0 border-t border-b border-t-[#aaa] border-b-[#8c8c8c] bg-[#f0f0f0] pt-[4px]">
      <div className="flex w-[11px] shrink-0 flex-col items-center gap-[3px] pt-px">
        <svg width="4" height="4" viewBox="0 0 4 4"><path d="M0 0l4 4M4 0L0 4" stroke="#000" /></svg>
        <span className="h-[9px] w-[8px] bg-[#d9dbde]" />
      </div>
      <div className="mr-[2px] flex-1 border-b border-[#c8c8c8] bg-white">
        <div className="flex h-[13px] border-t border-[#666] bg-[#717171] text-[7px]">
          <button className="flex w-[52px] items-center bg-white pl-[4px] text-[8px] font-bold text-black">Warnungen</button>
          <svg width="9" height="12" viewBox="0 0 9 12" className="shrink-0"><path d="M0 0l9 12H0z" fill="#fff" /></svg>
          <button className="flex w-[34px] items-center border-b border-[#777] bg-[#f4f4f4] pl-[3px]">Bindung</button>
          <svg width="9" height="12" viewBox="0 0 9 12" className="shrink-0"><path d="M0 0l9 12H0z" fill="#f4f4f4" /></svg>
          <button className="flex w-[34px] items-center bg-[#2f8fe8] pl-[3px] text-white">Protokoll</button>
          <svg width="12" height="12" viewBox="0 0 12 12" className="shrink-0"><path d="M0 0l9 12H0z" fill="#2f8fe8" /><path d="M4 4l5 6M7 4l5 6" stroke="#aaa" /></svg>
          <svg width="12" height="12" viewBox="0 0 12 12" className="ml-auto"><path d="M0 12l4-5h8v5z" fill="#fff" /><path d="M4 9h4M10 10h2" stroke="#333" strokeWidth="1.500" /></svg>
        </div>
      </div>
      <GripH className="top-0 left-[481px]" flip />
    </div>
  );
}

function Workspace() {
  return (
    <main className="flex min-w-0 flex-1 flex-col">
      <div className="mt-[5px] flex h-[14px] items-center pl-px">
        <label htmlFor="form-name" className="w-[98px] border-b border-[#ccc]">Formular</label>
        <input id="form-name" readOnly value="Z_TEST_ADOBE_FORM_ZD2" className="h-[13px] w-[147px] border border-[#7d8791] bg-[#eaeff4] pl-[2px] font-['Liberation_Mono',monospace] text-black outline-none" />
        <span className="pl-[2px]">aktiv</span>
      </div>

      <div className="mt-[3px] flex h-[13px] pl-[9px]">
        {formTabs.map((t) => (
          <button key={t.label} className={clsx('relative h-[13px] text-center', t.className)}>
            <svg width="100%" height="13" viewBox="0 0 77 13" preserveAspectRatio="none" className="absolute inset-0" aria-hidden="true">
              <path d="M0 13L11 .5h65.500V13" fill={t.active ? '#9cb6da' : '#dde7f5'} stroke="#6f849c" />
            </svg>
            <span className="relative">{t.label}</span>
          </button>
        ))}
      </div>

      <div className="flex min-h-0 flex-1 flex-col border-t border-b border-l border-[#7c93a8] bg-[#e4ebf6] pt-[15px] pr-[4px] pb-[11px] pl-[4px]">
        <div className="flex min-h-0 flex-1 flex-col border-r border-l border-[#8e8e8e] bg-[#eeeeee]">
          <MenuBar />
          <Toolbars />
          <ScriptBar />
          <div className="flex min-h-0 flex-1">
            <Hierarchy />
            <Designer />
            <SidePalette title="Objektbibliothek" className="w-[134px] pl-[4px]" />
            <SidePalette title="Objekt" extra="Ein-/Ausgabehilfe" className="w-[133px] border-r-0 pl-[4px]" />
          </div>
          <OutputPanel />
        </div>
      </div>
      <div className="h-[3px] shrink-0" />
    </main>
  );
}

export default function App() {
  return (
    <div className="flex h-screen flex-col bg-black pt-[76px] pb-[77px] font-['Noto_Sans',sans-serif] text-[8px] leading-[11px] text-[#333]">
      <div className="flex min-h-0 flex-1 flex-col bg-[#f3f5f9]">
        <div className="h-[8px] shrink-0 border-b border-[#b4b4b8] bg-[#ebebee]">
          <svg width="330" height="2" viewBox="0 0 330 2" aria-hidden="true">
            <path d="M52 .5h3M86 .5h6M126 .5h3M143 .5h4M178 .5h10M254 .5h3M312 .5h2" stroke="#666" />
          </svg>
        </div>
        <div className="flex min-h-0 flex-1 gap-[6px] pb-[3px] pl-[2px]">
          <Sidebar />
          <Workspace />
        </div>
      </div>
    </div>
  );
}
